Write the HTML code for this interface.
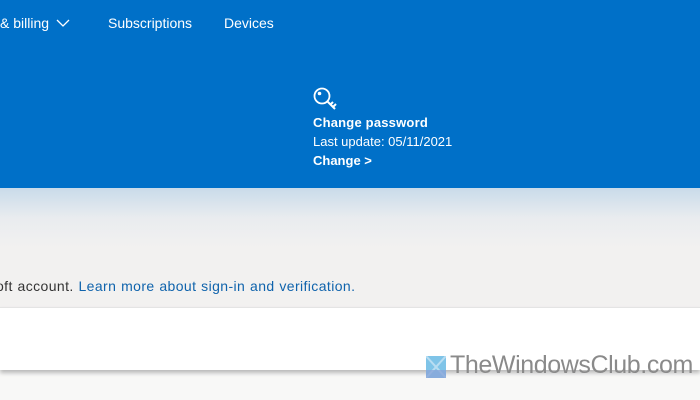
<!DOCTYPE html>
<html><head><style>
body{margin:0;width:700px;height:400px;overflow:hidden;font-family:"Liberation Sans",sans-serif;background:#f8f8f7;position:relative}
.blue{position:absolute;left:0;top:0;width:700px;height:188px;background:#0070c8;color:#fff}
.nav{position:absolute;top:15px;font-size:14px}
.grad{position:absolute;left:0;top:188px;width:700px;height:120px;background:linear-gradient(#c9dbea 0px,#e9ecef 30px,#f2f1f0 60px,#f2f1f0)}
.txt{position:absolute;left:-4px;top:278px;font-size:14px;color:#333;letter-spacing:0.4px;word-spacing:0.5px}
.txt span{color:#0f63ac}
.white{position:absolute;left:0;top:307px;width:700px;height:62px;background:#fff;border-top:1px solid #e4e4e4;box-shadow:0 3px 4px rgba(0,0,0,.25)}
.wm{position:absolute;left:450px;top:351px;font-size:25px;color:#8a8a8a;letter-spacing:-0.4px}
</style></head><body>
<div class="blue">
<div class="nav" style="left:0">&amp; billing <svg width="14" height="10" style="margin-left:3px"><path d="M1 2 L7 8 L13 2" stroke="#fff" fill="none" stroke-width="1.3"/></svg></div>
<div class="nav" style="left:108px">Subscriptions</div>
<div class="nav" style="left:224px">Devices</div>
<svg style="position:absolute;left:313px;top:87px" width="26" height="25" viewBox="0 0 26 25"><circle cx="9" cy="9" r="7.5" stroke="#fff" stroke-width="1.8" fill="none"/><circle cx="6.5" cy="6.5" r="1.8" fill="#fff"/><path d="M14.5 14.5 L22 22 M17.5 17.5 L20 15 M20 20 L23 17" stroke="#fff" stroke-width="2" fill="none"/></svg>
<div style="position:absolute;left:313px;top:115px;font-size:13px;font-weight:bold;letter-spacing:0.2px">Change password</div>
<div style="position:absolute;left:313px;top:134px;font-size:13px">Last update: 05/11/2021</div>
<div style="position:absolute;left:313px;top:153px;font-size:13px;font-weight:bold">Change &gt;</div>
</div>
<div class="grad"></div>
<div class="txt">oft account. <span>Learn more about sign-in and verification.</span></div>
<div class="white"></div>
<svg style="position:absolute;left:426px;top:356px" width="20" height="22"><rect width="20" height="22" fill="#7fc4e8"/><path d="M0 0 L20 22 M20 0 L0 22" stroke="#b8ddf2" stroke-width="2"/><rect y="14" width="20" height="8" fill="#8aa6d8" opacity=".8"/></svg>
<div class="wm">TheWindowsClub.com</div>
</body></html>
